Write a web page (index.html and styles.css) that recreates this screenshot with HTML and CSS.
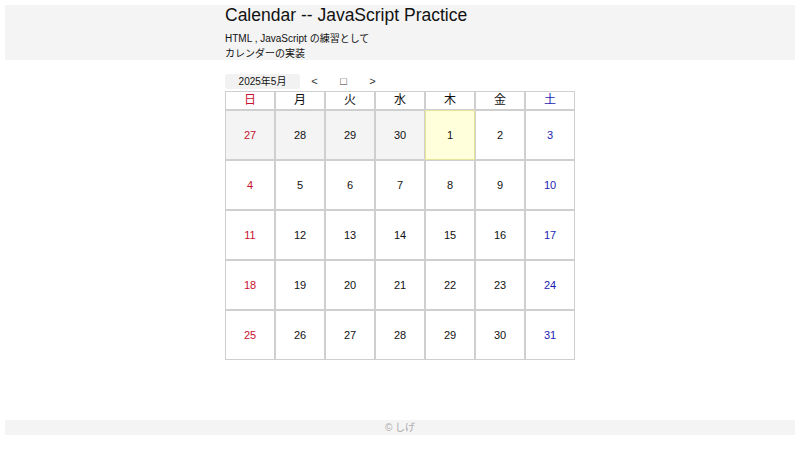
FILE: index.html
```html
<!DOCTYPE html>
<html lang="ja">
<head>
<meta charset="utf-8">
<title>Calendar -- JavaScript Practice</title>
<link rel="stylesheet" href="styles.css">
</head>
<body>
<header class="site-header">
  <div class="inner">
    <h1 class="title">Calendar -- JavaScript Practice</h1>
    <p class="lead">HTML , JavaScript の練習として<br>カレンダーの実装</p>
  </div>
</header>
<main class="main">
  <div class="inner">
    <div class="controls">
      <span class="month">2025年5月</span>
      <button class="nav">&lt;</button>
      <button class="nav">□</button>
      <button class="nav">&gt;</button>
    </div>
    <table class="cal">
      <thead>
        <tr><th class="sun">日</th><th>月</th><th>火</th><th>水</th><th>木</th><th>金</th><th class="sat">土</th></tr>
      </thead>
      <tbody>
        <tr><td class="sun other">27</td><td class="other">28</td><td class="other">29</td><td class="other">30</td><td class="today">1</td><td>2</td><td class="sat">3</td></tr>
        <tr><td class="sun">4</td><td>5</td><td>6</td><td>7</td><td>8</td><td>9</td><td class="sat">10</td></tr>
        <tr><td class="sun">11</td><td>12</td><td>13</td><td>14</td><td>15</td><td>16</td><td class="sat">17</td></tr>
        <tr><td class="sun">18</td><td>19</td><td>20</td><td>21</td><td>22</td><td>23</td><td class="sat">24</td></tr>
        <tr><td class="sun">25</td><td>26</td><td>27</td><td>28</td><td>29</td><td>30</td><td class="sat">31</td></tr>
      </tbody>
    </table>
  </div>
</main>
<footer class="site-footer">© しげ</footer>
</body>
</html>
```
FILE: styles.css
```css
html, body {
  margin: 0;
  padding: 0;
}
body {
  margin: 5px;
  font-family: "Liberation Sans", Arial, "Noto Sans CJK JP", sans-serif;
  color: #111;
  background: #fff;
}
.inner {
  width: 350px;
  margin: 0 auto;
}
.site-header {
  background: #f4f4f4;
  height: 55px;
}
.title {
  margin: 0;
  font-size: 17.5px;
  font-weight: normal;
  line-height: 20px;
}
.lead {
  margin: 6px 0 0;
  font-size: 10px;
  line-height: 15px;
}
.main {
  height: 360px;
  padding-top: 13px;
  box-sizing: border-box;
}
.controls {
  display: flex;
  align-items: center;
  height: 16px;
  margin-bottom: 2px;
}
.month {
  display: inline-block;
  width: 75px;
  height: 15px;
  line-height: 15px;
  text-align: center;
  background: #f2f2f2;
  border-radius: 3px;
  font-size: 10px;
}
.nav {
  width: 29px;
  padding: 0;
  border: none;
  background: transparent;
  font-family: "Liberation Sans", "DejaVu Sans", sans-serif;
  font-size: 11px;
  color: #333;
}
.cal {
  border-collapse: separate;
  border-spacing: 0;
  table-layout: fixed;
  width: 350px;
}
.cal th, .cal td {
  border: 1px solid #cfcfcf;
  width: 48px;
  padding: 0;
  text-align: center;
  font-weight: normal;
}
.cal th {
  height: 17px;
  font-size: 12px;
  line-height: 17px;
}
.cal td {
  height: 48px;
  font-size: 11px;
}
.sun { color: #c8102e; }
.sat { color: #1c1cb0; }
.other { background: #f4f4f4; }
.today {
  background: #ffffdc;
  border-color: #e6e69a !important;
}
.site-footer {
  background: #f4f4f4;
  height: 15px;
  line-height: 15px;
  text-align: center;
  font-size: 10px;
  color: #aaa;
}
```
